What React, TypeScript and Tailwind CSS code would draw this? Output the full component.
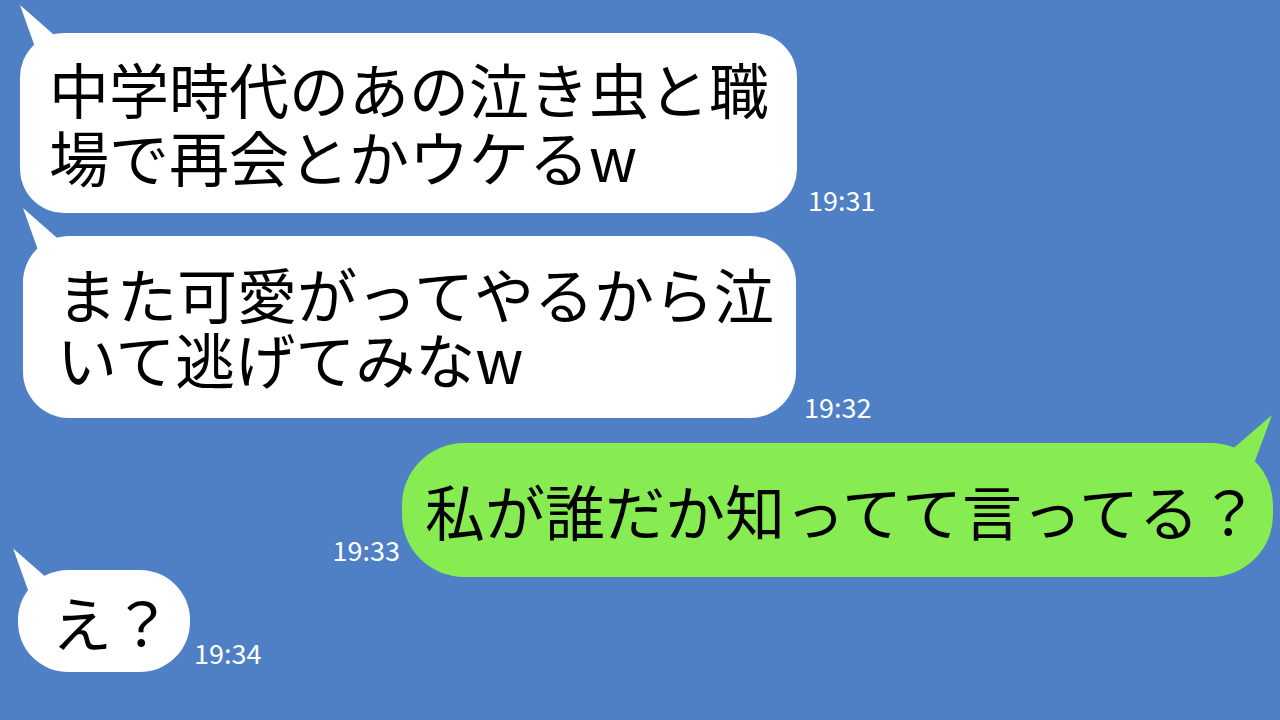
import type { ReactNode } from 'react'

const BG = 'bg-[#4f7fc4]'

function Time({ children, className }: { children: ReactNode; className?: string }) {
  return (
    <span className={`text-[27px] leading-[27px] text-white whitespace-nowrap ${className ?? ''}`}>
      {children}
    </span>
  )
}

function LeftTail({ className }: { className?: string }) {
  return (
    <svg className={`absolute overflow-visible ${className ?? ''}`} width="44" height="60" viewBox="0 0 44 60">
      <polygon points="0,2 41,38 20,58" fill="#ffffff" />
    </svg>
  )
}

function RightTail({ className }: { className?: string }) {
  return (
    <svg className={`absolute overflow-visible ${className ?? ''}`} width="50" height="60" viewBox="0 0 50 60">
      <polygon points="48,2 5,39 28,56" fill="#87ec52" />
    </svg>
  )
}

export default function App() {
  return (
    <div
      className={`w-[1280px] h-[720px] overflow-hidden ${BG} font-['Noto_Sans_CJK_JP','Noto_Sans',sans-serif] text-black`}
    >
      <div className="flex flex-col pt-[33px]">
        {/* 19:31 */}
        <div className="flex items-end ml-[20px]">
          <div className="relative w-[777px] h-[180px] rounded-[44px] bg-white pl-[29px] pt-[21px] text-[60px] leading-[68px] whitespace-nowrap">
            <LeftTail className="left-0 -top-[30px]" />
            <span className="relative">
              中学時代のあの泣き虫と職
              <br />
              場で再会とかウケるw
            </span>
          </div>
          <Time className="ml-[11px]">19:31</Time>
        </div>

        {/* 19:32 */}
        <div className="flex items-end ml-[23px] mt-[23px]">
          <div className="relative w-[773px] h-[182px] rounded-[46px] bg-white pl-[34px] pt-[24px] text-[60px] leading-[65px] whitespace-nowrap">
            <LeftTail className="left-0 -top-[30px]" />
            <span className="relative">
              また可愛がってやるから泣
              <br />
              いて逃げてみなw
            </span>
          </div>
          <Time className="ml-[8px] -mb-[2px]">19:32</Time>
        </div>

        {/* 19:33 */}
        <div className="flex items-end justify-end mr-[7px] mt-[25px]">
          <Time className="mr-[2px] mb-[14px]">19:33</Time>
          <div className="relative w-[871px] h-[134px] rounded-[62px] bg-[#87ec52] pl-[23px] pt-[33px] text-[60px] leading-[68px] whitespace-nowrap">
            <RightTail className="-right-[1px] -top-[30px]" />
            <span className="relative">私が誰だか知ってて言ってる？</span>
          </div>
        </div>

        {/* 19:34 */}
        <div className="flex items-end ml-[18px] -mt-[7px]">
          <div className="relative w-[172px] h-[102px] rounded-[50px] bg-white pl-[34px] flex items-center text-[60px] leading-[68px] whitespace-nowrap">
            <LeftTail className="-left-[6px] -top-[25px] scale-[0.95]" />
            <span className="relative">え？</span>
          </div>
          <Time className="ml-[4px] mb-[6px]">19:34</Time>
        </div>
      </div>
    </div>
  )
}
